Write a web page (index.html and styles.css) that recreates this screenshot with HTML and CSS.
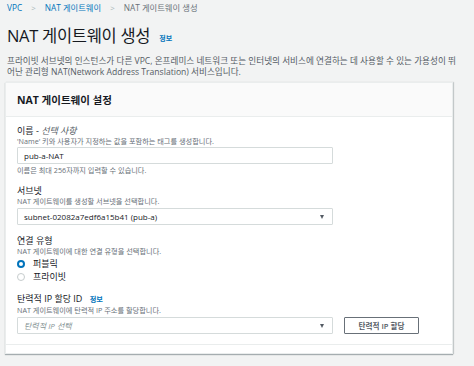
FILE: index.html
```html
<!DOCTYPE html>
<html lang="ko">
<head>
<meta charset="utf-8">
<link rel="stylesheet" href="styles.css">
</head>
<body>
<div class="page">
  <nav class="breadcrumb">
    <a class="crumb-link">VPC</a>
    <span class="crumb-sep">&gt;</span>
    <a class="crumb-link">NAT 게이트웨이</a>
    <span class="crumb-sep">&gt;</span>
    <span class="crumb-current">NAT 게이트웨이 생성</span>
  </nav>
  <div class="title-row">
    <h1 class="title">NAT 게이트웨이 생성</h1>
    <a class="info-link info-title">정보</a>
  </div>
  <p class="page-desc">프라이빗 서브넷의 인스턴스가 다른 VPC, 온프레미스 네트워크 또는 인터넷의 서비스에 연결하는 데 사용할 수 있는 가용성이 뛰어난 관리형 NAT(Network Address Translation) 서비스입니다.</p>

  <section class="card">
    <header class="card-header">NAT 게이트웨이 설정</header>
    <div class="card-body">
      <div class="field">
        <div class="label">이름 - <i>선택 사항</i></div>
        <div class="hint">'Name' 키와 사용자가 지정하는 값을 포함하는 태그를 생성합니다.</div>
        <div class="control input">pub-a-NAT</div>
        <div class="constraint">이름은 최대 256자까지 입력할 수 있습니다.</div>
      </div>
      <div class="field">
        <div class="label">서브넷</div>
        <div class="hint">NAT 게이트웨이를 생성할 서브넷을 선택합니다.</div>
        <div class="control select"><span>subnet-02082a7edf6a15b41 (pub-a)</span><span class="caret"></span></div>
      </div>
      <div class="field">
        <div class="label">연결 유형</div>
        <div class="hint">NAT 게이트웨이에 대한 연결 유형을 선택합니다.</div>
        <div class="radios">
          <div class="radio-row"><span class="radio checked"></span><span>퍼블릭</span></div>
          <div class="radio-row"><span class="radio"></span><span>프라이빗</span></div>
        </div>
      </div>
      <div class="field">
        <div class="label">탄력적 IP 할당 ID <a class="info-link info-label">정보</a></div>
        <div class="hint">NAT 게이트웨이에 탄력적 IP 주소를 할당합니다.</div>
        <div class="control-row">
          <div class="control select placeholder"><span>탄력적 IP 선택</span><span class="caret"></span></div>
          <button class="btn">탄력적 IP 할당</button>
        </div>
      </div>
    </div>
    <div class="card-footer"></div>
  </section>
</div>
</body>
</html>
```

FILE: styles.css
```css
* { box-sizing: border-box; }
html, body { margin: 0; padding: 0; }
body {
  background: #f2f3f3;
  font-family: "Open Sans", "Noto Sans CJK KR", sans-serif;
  color: #16191f;
  width: 474px;
  height: 366px;
  overflow: hidden;
}
.page { padding: 0 0 0 7px; }

.breadcrumb {
  height: 16px;
  line-height: 16px;
  font-size: 8.3px;
  display: flex;
  align-items: center;
  gap: 9px;
  white-space: nowrap;
}
.crumb-link { color: #0073bb; }
.crumb-sep { color: #aab7b8; font-size: 8px; }
.crumb-current { color: #687078; }

.title-row {
  margin-top: 8px;
  height: 24px;
  display: flex;
  align-items: center;
  gap: 9px;
}
.title {
  margin: 0;
  font-size: 16.5px;
  font-weight: 400;
  line-height: 24px;
  letter-spacing: -0.3px;
  color: #16191f;
}
.info-link { color: #0073bb; font-weight: 700; }
.info-title { font-size: 7px; margin-top: 4px; }

.page-desc {
  margin: 8px 0 0 0;
  width: 451px;
  font-size: 8.6px;
  line-height: 11px;
  color: #545b64;
  word-break: break-all;
}

.card {
  margin: 4px 0 0 -2px;
  width: 448px;
  background: #fff;
  border: 1px solid #eaeded;
  box-shadow: 0 1px 1px 0 rgba(0, 28, 36, 0.3), 1px 0 1px 0 rgba(0, 28, 36, 0.15);
}
.card-header {
  height: 34px;
  line-height: 34px;
  padding-left: 11px;
  background: #fafafa;
  border-bottom: 1px solid #eaeded;
  font-size: 10.5px;
  font-weight: 700;
  color: #16191f;
}
.card-body {
  padding: 8px 11px 10px 11px;
}
.card-footer {
  height: 9px;
  border-top: 1px solid #eaeded;
}

.field + .field { margin-top: 10px; }
.label {
  font-size: 9px;
  line-height: 11px;
  color: #16191f;
}
.label i { font-style: italic; color: #545b64; }
.info-label { font-size: 7.2px; margin-left: 5px; }
.hint {
  font-size: 7.2px;
  line-height: 10px;
  color: #687078;
}
.constraint {
  margin-top: 1px;
  font-size: 7.2px;
  line-height: 10px;
  color: #687078;
}
.control {
  width: 316px;
  height: 17px;
  border: 1px solid #d5dbdb;
  border-radius: 1px;
  background: #fff;
  padding: 0 6px;
  font-size: 8px;
  line-height: 15px;
  color: #16191f;
}
.input { margin-top: 1px; }
.select {
  margin-top: 2px;
  display: flex;
  align-items: center;
  justify-content: space-between;
  padding-right: 8px;
}
.select.placeholder { color: #879596; font-style: italic; }
.caret {
  width: 0;
  height: 0;
  border-left: 2.5px solid transparent;
  border-right: 2.5px solid transparent;
  border-top: 4px solid #545b64;
}

.radios { margin-top: 1px; }
.radio-row {
  height: 13px;
  display: flex;
  align-items: center;
  gap: 8px;
  font-size: 9px;
  color: #16191f;
}
.radio {
  width: 8px;
  height: 8px;
  border-radius: 50%;
  border: 1px solid #c6cccd;
  background: #fff;
}
.radio.checked { border: 2.5px solid #0073bb; }

.control-row {
  margin-top: 2px;
  display: flex;
  align-items: center;
  gap: 11px;
}
.control-row .select { margin-top: 0; }
.btn {
  width: 75px;
  height: 17px;
  padding: 0;
  background: #fff;
  border: 1px solid #687078;
  border-radius: 1px;
  font-family: "Open Sans", "Noto Sans CJK KR", sans-serif;
  font-size: 7.6px;
  font-weight: 600;
  color: #545b64;
}
```
